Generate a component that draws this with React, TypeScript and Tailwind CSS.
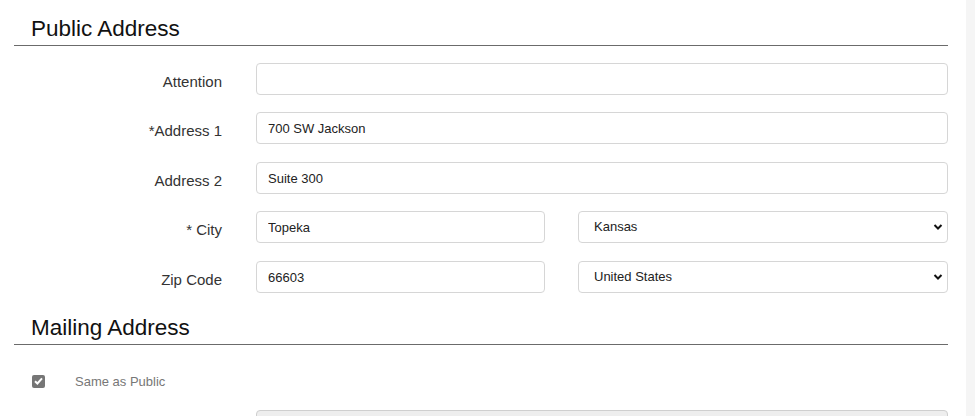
const font = { fontFamily: '"Liberation Sans", Arial, sans-serif' };

type RowProps = {
  label: string;
  className?: string;
  children: React.ReactNode;
};

const Row = ({ label, className, children }: RowProps) => (
  <div className={`flex items-center h-[32px] ${className ?? ''}`}>
    <label className="w-[208px] pt-[6px] text-right text-[15px] text-[#333]">{label}</label>
    <div className="ml-[34px] flex-1 flex gap-[33px] h-full">{children}</div>
  </div>
);

const TextInput = ({ value, className }: { value?: string; className?: string }) => (
  <input
    readOnly
    defaultValue={value}
    className={`h-full px-[11px] text-[13px] text-[#222] bg-white border border-[#d6d6d6] rounded-[4px] outline-none ${className ?? 'w-full'}`}
    style={font}
  />
);

const Select = ({ value }: { value: string }) => (
  <div className="relative flex-1 h-full">
    <select
      defaultValue={value}
      className="appearance-none w-full h-full pl-[15px] text-[13px] text-[#222] bg-white border border-[#d6d6d6] rounded-[4px] outline-none"
      style={font}
    >
      <option>{value}</option>
    </select>
    <svg
      className="absolute right-[5px] top-[12px] pointer-events-none"
      width="10"
      height="8"
      viewBox="0 0 10 8"
    >
      <path d="M1.5 2 L5 5.5 L8.5 2" fill="none" stroke="#111" strokeWidth="2" />
    </svg>
  </div>
);

const Heading = ({ title, className }: { title: string; className?: string }) => (
  <div className={`pl-[17px] pb-[2px] border-b border-[#6b6b6b] ${className ?? ''}`}>
    <h2 className="text-[22.5px] leading-[28px] text-[#111]">{title}</h2>
  </div>
);

export default function App() {
  return (
    <div className="flex w-[975px] h-[416px] overflow-hidden bg-white" style={font}>
      <div className="w-[966px] pl-[14px] pr-[18px]">
        <Heading title="Public Address" className="pt-[15px]" />

        <Row label="Attention" className="mt-[17px]">
          <TextInput />
        </Row>
        <Row label="*Address 1" className="mt-[17px]">
          <TextInput value="700 SW Jackson" />
        </Row>
        <Row label="Address 2" className="mt-[18px]">
          <TextInput value="Suite 300" />
        </Row>
        <Row label="* City" className="mt-[17px]">
          <TextInput value="Topeka" className="w-[289px]" />
          <Select value="Kansas" />
        </Row>
        <Row label="Zip Code" className="mt-[18px]">
          <TextInput value="66603" className="w-[289px]" />
          <Select value="United States" />
        </Row>

        <Heading title="Mailing Address" className="mt-[21px]" />

        <div className="flex items-center mt-[29px] h-[14px]">
          <div className="ml-[18px] w-[13px] h-[13px] rounded-[2px] bg-[#767676] flex items-center justify-center">
            <svg width="9" height="8" viewBox="0 0 9 8">
              <path d="M1 4.2 L3.4 6.5 L8 1.3" fill="none" stroke="#fff" strokeWidth="2" />
            </svg>
          </div>
          <span className="ml-[30px] pt-[1px] text-[13px] text-[#777]">Same as Public</span>
        </div>

        <div className="mt-[22px] ml-[242px] h-[32px] bg-[#eeeeee] border border-[#cfcfcf] rounded-[4px]" />
      </div>
      <div className="flex-1 bg-[#f5f5f5]" />
    </div>
  );
}
